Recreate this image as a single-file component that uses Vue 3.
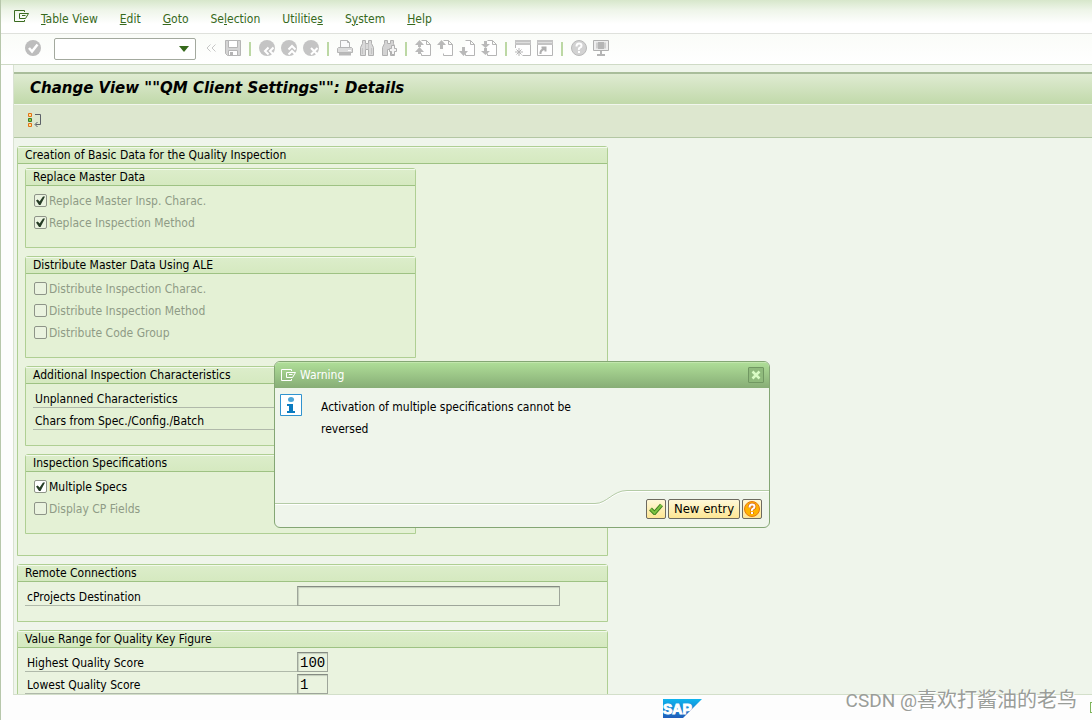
<script setup>
import { ref } from 'vue'

const menus = [
  { pre: '', key: 'T', post: 'able View' },
  { pre: '', key: 'E', post: 'dit' },
  { pre: '', key: 'G', post: 'oto' },
  { pre: 'Se', key: 'l', post: 'ection' },
  { pre: 'Utilitie', key: 's', post: '' },
  { pre: 'S', key: 'y', post: 'stem' },
  { pre: '', key: 'H', post: 'elp' }
]

const tools = [
  ['collapse', 'save'],
  ['back', 'exit', 'cancel'],
  ['print', 'find', 'findNext'],
  ['firstPage', 'prevPage', 'nextPage', 'lastPage'],
  ['newSession', 'shortcut'],
  ['help', 'layout']
]

const labels = {
  collapse: 'Collapse command field', save: 'Save', back: 'Back', exit: 'Exit', cancel: 'Cancel',
  print: 'Print', find: 'Find', findNext: 'Find next', firstPage: 'First page',
  prevPage: 'Previous page', nextPage: 'Next page', lastPage: 'Last page',
  newSession: 'New session', shortcut: 'Create shortcut', help: 'Help', layout: 'Customize layout'
}

const page = 'M6.5 .5h5l4 4v11h-9v-2M11.5 .5v4h4'
const glyphs = {
  collapse: [{ d: 'M7.5 4.5L4 8l3.5 3.5M12.5 4.5L9 8l3.5 3.5', s: '#c6c6c6' }],
  save: [
    { d: 'M.5 .5h15v15h-13l-2-2z', s: '#b5b5b5', f: '#d4d4d4' },
    { d: 'M3.500 .5h9v7h-9z', s: '#b5b5b5', f: '#fff' },
    { d: 'M3.500 10.500h9v5h-9z', s: '#b5b5b5', f: '#fff' },
    { d: 'M5 12h3v4h-3z', f: '#b5b5b5' }
  ],
  back: [
    { d: 'M8 0a8 8 0 1 0 0 16a8 8 0 1 0 0-16z', f: '#c4c4c4' },
    { d: 'M9.500 7.500L6 11l3.500 3.500M14.500 7.500L11 11l3.500 3.500', s: '#fff', w: 2 }
  ],
  exit: [
    { d: 'M8 0a8 8 0 1 0 0 16a8 8 0 1 0 0-16z', f: '#c4c4c4' },
    { d: 'M7.500 9.500L11 6l3.500 3.500M7.500 14.500L11 11l3.500 3.500', s: '#fff', w: 2 }
  ],
  cancel: [
    { d: 'M8 0a8 8 0 1 0 0 16a8 8 0 1 0 0-16z', f: '#c4c4c4' },
    { d: 'M8 8l6.500 6.500M14.500 8L8 14.500', s: '#fff', w: 2 }
  ],
  print: [
    { d: 'M3.500 7.500v-7h7l2 2v5', s: '#b5b5b5', f: '#fafafa' },
    { d: 'M10.500 .5v2h2', s: '#b5b5b5' },
    { d: 'M1.500 7.500h13l1 1v4h-15v-4z', s: '#b5b5b5', f: '#dcdcdc' },
    { d: 'M2 12.500h12v3h-12z', f: '#b9b9b9' },
    { d: 'M11 10h3v1h-3z', f: '#fff' }
  ],
  find: [
    { d: 'M3.500 .5h3v3h3v-3h3v3l2 4v8h-5v-6h-3v6h-5v-8l2-4z', s: '#b0b0b0', f: '#d9d9d9' },
    { d: 'M6.500 4v5M9.500 4v5M3.500 8v6M12.500 8v6', s: '#c3c3c3' }
  ],
  findNext: [
    { d: 'M3.500 .5h3v3h3v-3h3v3l1 3v9h-4v-6h-3v6h-5v-8l2-4z', s: '#b0b0b0', f: '#d3d3d3' },
    { d: 'M10.500 5.500h3v3h2v3h-2v3h-3v-3h-2v-3h2z', s: '#b0b0b0', f: '#f4f4f4' }
  ],
  firstPage: [
    { d: page, s: '#b5b5b5', f: '#fff' },
    { d: 'M4.500 0L9 5H6v2h-3v-2H0zM4.500 7L9 12H6v2h-3v-2H0z', f: '#b9b9b9' }
  ],
  prevPage: [
    { d: page, s: '#b5b5b5', f: '#fff' },
    { d: 'M4.500 0L9 5H6v4h-3v-4H0z', f: '#b9b9b9' }
  ],
  nextPage: [
    { d: page, s: '#b5b5b5', f: '#fff' },
    { d: 'M4.500 16L9 11H6V7h-3v4H0z', f: '#b9b9b9' }
  ],
  lastPage: [
    { d: page, s: '#b5b5b5', f: '#fff' },
    { d: 'M4.500 8L9 4H6V1h-3v3H0zM4.500 15L9 11H6V8h-3v3H0z', f: '#b9b9b9' }
  ],
  newSession: [
    { d: 'M.5 8v-7.500h15v15h-8', s: '#b5b5b5', f: '#fff' },
    { d: 'M0 0h16v5h-16z', f: '#c4c4c4' },
    { d: 'M1 2.500h14', s: '#dedede' },
    { d: 'M4 8v8M0 12h8M1.500 9.500l5 5M6.500 9.500l-5 5', s: '#b5b5b5' }
  ],
  shortcut: [
    { d: 'M.5 .5h15v15h-15z', s: '#b5b5b5', f: '#fff' },
    { d: 'M0 0h16v5h-16z', f: '#c4c4c4' },
    { d: 'M1 2.500h14', s: '#dedede' },
    { d: 'M3.500 14q-.5-4 4-5M4.500 7.500h4v4', s: '#b0b0b0', w: 2 }
  ],
  help: [
    { d: 'M8 .5a7.500 7.500 0 1 0 0 15a7.500 7.500 0 1 0 0-15z', s: '#b9b9b9', f: '#d2d2d2' },
    { d: 'M5.500 6.500q0-3 2.500-3t2.500 2.200q0 1.300-1.500 2t-1 2.300M8 11v2', s: '#fff', w: 2 }
  ],
  layout: [
    { d: 'M.5 .5h15v10h-15z', s: '#b0b0b0', f: '#eee' },
    { d: 'M3 2.500h2v6h-2zM11 2.500h2v6h-2z', f: '#cfcfcf' },
    { d: 'M5 2h6v7h-6z', f: '#b5b5b5' },
    { d: 'M7 11h2v3h-2zM4 14h8v2h-8z', f: '#b5b5b5' }
  ]
}

const command = ref('')
const replace = ref([
  { label: 'Replace Master Insp. Charac.', on: true },
  { label: 'Replace Inspection Method', on: true }
])
const distribute = ref([
  { label: 'Distribute Inspection Charac.', on: false },
  { label: 'Distribute Inspection Method', on: false },
  { label: 'Distribute Code Group', on: false }
])
const multipleSpecs = ref(true)
const cpFields = ref(false)
const destination = ref('')
const highest = ref('100')
const lowest = ref('1')
</script>

<template>
  <div class="window">
    <nav class="menubar">
      <button class="sysmenu" aria-label="System menu">
        <svg width="16" height="12" viewBox="0 0 16 12"><path d="M10.500 2V.5H.5v11h10V10M5.500 3.500h9l-3 5h-6zM8 5.500h3.500" fill="none" stroke="#3a6b1f" /></svg>
      </button>
      <button v-for="m in menus" :key="m.key + m.post" class="menu">{{ m.pre }}<u>{{ m.key }}</u>{{ m.post }}</button>
    </nav>

    <div class="toolbar">
      <button class="tool" aria-label="Enter">
        <svg width="16" height="16" viewBox="0 0 16 16"><circle cx="8" cy="8" r="8" fill="#bdbdbd" /><path d="M4 8l3 3.500L12.500 4.500" fill="none" stroke="#fff" stroke-width="2.500" /></svg>
      </button>
      <div class="command">
        <input v-model="command" type="text" aria-label="Command" />
        <button aria-label="Command history"><svg width="10" height="6" viewBox="0 0 10 6"><path d="M0 0h10L5 6z" fill="#36691c" /></svg></button>
      </div>
      <div v-for="(set, n) in tools" :key="n" class="toolset">
        <button v-for="t in set" :key="t" class="tool" :aria-label="labels[t]">
          <svg width="16" height="16" viewBox="0 0 16 16">
            <path v-for="(p, i) in glyphs[t]" :key="i" :d="p.d" :fill="p.f || 'none'" :stroke="p.s || 'none'" :stroke-width="p.w || 1" />
          </svg>
        </button>
      </div>
    </div>

    <main class="work">
      <header class="titlebar"><h1>Change View ""QM Client Settings"": Details</h1></header>
      <div class="appbar">
        <button class="tool" aria-label="Expand and collapse">
          <svg width="14" height="14" viewBox="0 0 14 14">
            <path d="M.5 .5h3v3h-3zM.5 10.500h3v3h-3z" fill="#ffe08a" stroke="#e07018" />
            <path d="M.5 5.500h3v3h-3z" fill="#8cc63f" stroke="#3c7a28" />
            <path d="M7 1.500h5.500v10H7.500M9.500 9L7 11.500L9.500 14" fill="none" stroke="#5c6168" />
          </svg>
        </button>
      </div>

      <div class="content">
        <section class="group">
          <h2>Creation of Basic Data for the Quality Inspection</h2>
          <div class="body nest">
            <section class="group inner">
              <h2>Replace Master Data</h2>
              <div class="body">
                <label v-for="c in replace" :key="c.label" class="check off"><input v-model="c.on" type="checkbox" disabled />{{ c.label }}</label>
              </div>
            </section>
            <section class="group inner">
              <h2>Distribute Master Data Using ALE</h2>
              <div class="body">
                <label v-for="c in distribute" :key="c.label" class="check off"><input v-model="c.on" type="checkbox" disabled />{{ c.label }}</label>
              </div>
            </section>
            <section class="group inner">
              <h2>Additional Inspection Characteristics</h2>
              <div class="body">
                <div class="field"><span class="name">Unplanned Characteristics</span></div>
                <div class="field"><span class="name">Chars from Spec./Config./Batch</span></div>
              </div>
            </section>
            <section class="group inner">
              <h2>Inspection Specifications</h2>
              <div class="body">
                <label class="check"><input v-model="multipleSpecs" type="checkbox" />Multiple Specs</label>
                <label class="check off"><input v-model="cpFields" type="checkbox" disabled />Display CP Fields</label>
              </div>
            </section>
          </div>
        </section>

        <section class="group">
          <h2>Remote Connections</h2>
          <div class="body">
            <div class="field"><label class="name" for="dest">cProjects Destination</label><input id="dest" v-model="destination" class="long" type="text" /></div>
          </div>
        </section>

        <section class="group">
          <h2>Value Range for Quality Key Figure</h2>
          <div class="body">
            <div class="field"><label class="name" for="high">Highest Quality Score</label><input id="high" v-model="highest" class="short" type="text" /></div>
            <div class="field"><label class="name" for="low">Lowest Quality Score</label><input id="low" v-model="lowest" class="short" type="text" /></div>
          </div>
        </section>
      </div>
    </main>

    <footer class="status">
      <svg width="39" height="19" viewBox="0 0 39 19">
        <defs><linearGradient id="sap" x1="0" y1="0" x2="0" y2="1"><stop offset="0" stop-color="#0fb5ee" /><stop offset="1" stop-color="#1f5cba" /></linearGradient></defs>
        <path d="M0 0h39L20 19H0z" fill="url(#sap)" />
        <text x="0" y="15" class="sap">SAP</text>
      </svg>
    </footer>
    <div class="edge"></div>
    <div class="watermark"><span>CSDN @</span>喜欢打酱油的老鸟</div>

    <div class="dialog" role="dialog" aria-labelledby="dlg">
      <header>
        <svg width="16" height="12" viewBox="0 0 16 12"><path d="M10.500 2V.5H.5v11h10V10M5.500 3.500h9l-3 5h-6zM8 5.500h3.500" fill="none" stroke="#fff" /></svg>
        <h2 id="dlg">Warning</h2>
        <button aria-label="Close"><svg width="10" height="10" viewBox="0 0 10 10"><path d="M1.500 1.500l7 7M8.500 1.500l-7 7" stroke="#d9fbc4" stroke-width="2.500" /></svg></button>
      </header>
      <div class="message">
        <svg width="22" height="22" viewBox="0 0 22 22">
          <path d="M.5 .5h21v21H.5z" fill="#fff" stroke="#2f93cf" />
          <ellipse cx="11" cy="5.500" rx="3" ry="2.500" fill="#4ba6d8" />
          <path d="M7 10h6v7h2v2H7v-2h2v-5H7z" fill="#0a7bc0" />
        </svg>
        <p>Activation of multiple specifications cannot be<br />reversed</p>
      </div>
      <div class="actions">
        <div class="rule">
          <span class="low"></span>
          <svg width="32" height="16" viewBox="0 0 32 16"><path d="M0 14.500C12 14.500 18 1.500 32 1.500" fill="none" stroke="#fff" /><path d="M0 13.500C12 13.500 18 .5 32 .5" fill="none" stroke="#b4cba6" /></svg>
          <span class="high"></span>
        </div>
        <div class="buttons">
          <button class="square" aria-label="Continue"><svg width="14" height="12" viewBox="0 0 14 12"><path d="M1.500 6l4 4L12.500 2" fill="none" stroke="#3f8020" stroke-width="4" /><path d="M1.500 6l4 4L12.500 2" fill="none" stroke="#7dc242" stroke-width="2" /></svg></button>
          <button class="wide">New entry</button>
          <button class="square" aria-label="Help"><svg width="16" height="16" viewBox="0 0 16 16"><circle cx="8" cy="8" r="7.500" fill="#ffb400" stroke="#e87710" /><path d="M5.500 6.500q0-3 2.500-3t2.500 2.200q0 1.300-1.500 2t-1 2.300M8 11v2" fill="none" stroke="#d9661a" stroke-width="3.500" /><path d="M5.500 6.500q0-3 2.500-3t2.500 2.200q0 1.300-1.500 2t-1 2.300M8 11v2" fill="none" stroke="#fff" stroke-width="2" /></svg></button>
        </div>
      </div>
    </div>
  </div>
</template>

<style>
body { margin: 0; }
</style>

<style scoped>
* { box-sizing: border-box; }
.window {
  position: relative;
  display: flex;
  flex-direction: column;
  height: 100vh;
  overflow: hidden;
  border-left: 1px solid #b7c7ab;
  background: #fdfdfd;
  color: #000;
  font: 12px/16px "DejaVu Sans Condensed", "DejaVu Sans", sans-serif;
  font-stretch: condensed;
}
button, input { font: inherit; color: inherit; margin: 0; }
button { padding: 0; border: 0; background: none; display: flex; align-items: center; justify-content: center; }
svg { display: block; flex: none; }
h1, h2, p { margin: 0; }

.menubar {
  display: flex;
  align-items: center;
  gap: 22px;
  height: 34px;
  padding: 4px 0 0 13px;
  border-bottom: 1px solid #dfe1dc;
  background: linear-gradient(#d7e7cb, #eef5e9 10px, #fff 24px);
  color: #36691c;
  flex: none;
}
.menu { display: block; white-space: nowrap; }
.sysmenu { margin: 0 -11px 6px 0; }

.toolbar {
  display: flex;
  align-items: center;
  height: 31px;
  padding-left: 21px;
  border-bottom: 1px solid #cfdac6;
  background: linear-gradient(#fafcf8, #fff);
  flex: none;
}
.tool { width: 22px; height: 22px; }
.toolbar .tool { padding-bottom: 2px; }
.command {
  display: flex;
  width: 142px;
  height: 22px;
  margin: 0 4px 0 10px;
  border: 1px solid #a3a99e;
  border-radius: 2px;
  background: #fff;
}
.command input { flex: 1; min-width: 0; border: 0; outline: 0; background: none; }
.command button { width: 22px; }
.toolset { display: flex; align-items: center; }
.toolset + .toolset::before { content: ""; width: 2px; height: 14px; margin: 0 5px; background: #bcd8a4; }

.work {
  display: flex;
  flex-direction: column;
  flex: 1;
  min-height: 0;
  margin-left: 12px;
  padding-top: 7px;
  border-left: 1px solid #d9e2d2;
  border-bottom: 1px solid #d3dfca;
  background: #eff5eb;
}
.titlebar {
  display: flex;
  align-items: center;
  height: 33px;
  padding: 0 16px 2px;
  border-top: 2px solid #a9bd9b;
  border-bottom: 1px solid #f1f6ed;
  background: linear-gradient(#dfebd2, #c1d9aa);
  flex: none;
}
h1 { font: italic bold 15px/20px "DejaVu Sans", sans-serif; white-space: nowrap; }
.appbar {
  display: flex;
  align-items: center;
  height: 33px;
  padding: 0 0 2px 10px;
  border-bottom: 1px solid #b3c7a3;
  background: #dde7cf;
  flex: none;
}
.content {
  display: flex;
  flex-direction: column;
  gap: 8px;
  flex: 1;
  min-height: 0;
  padding: 8px 3px 0;
  overflow: hidden;
}
.group { width: 591px; max-width: 100%; flex: none; border: 1px solid #afcf93; border-radius: 3px 3px 0 0; background: #eaf3df; }
.group.inner { width: 391px; background: #e4f1d5; }
.group > h2 {
  height: 17px;
  padding-left: 7px;
  border-top: 1px solid #f2f9ec;
  border-bottom: 1px solid #9ec283;
  background: linear-gradient(#dcedca, #d5e9c0);
  font-size: 12px;
  line-height: 15px;
  font-weight: normal;
  white-space: nowrap;
}
.body { padding: 4px 7px 13px; }
.body.nest { display: flex; flex-direction: column; gap: 8px; padding-bottom: 21px; }
.check { display: flex; align-items: center; gap: 2px; height: 22px; padding-left: 1px; }
.check.off { color: #8f9b86; }
.check input {
  appearance: none;
  position: relative;
  width: 13px;
  height: 13px;
  margin-bottom: 1px;
  border: 1px solid #8e9488;
  border-radius: 2px;
  background: #fff;
}
.check input:disabled { background: #eaf3df; }
.check input:checked::after {
  content: "";
  position: absolute;
  inset: 1px;
  background: #263d26;
  clip-path: polygon(0 50%, 20% 38%, 40% 62%, 78% 5%, 100% 5%, 50% 100%, 34% 100%);
}
.field { display: flex; height: 22px; align-items: flex-start; }
.name { width: 272px; height: 20px; padding: 1px 2px 0; border-bottom: 1px solid #b0b9aa; line-height: 20px; }
.field input {
  height: 20px;
  padding: 2px 2px 0;
  border: 1px solid #9ea59a;
  border-top-color: #858b82;
  outline: 0;
  background: #eaf3df;
  box-shadow: inset 1px 1px 1px #c3ccbb;
  font: 14px/16px "Liberation Mono", monospace;
}
.long { width: 263px; }
.short { width: 31px; }

.status { display: flex; height: 25px; padding: 4px 390px 0 0; justify-content: flex-end; flex: none; background: #fdfdfd; }
.sap { font: bold 14px "Liberation Sans", sans-serif; fill: #fff; stroke: #fff; stroke-width: 1px; }
.edge { position: absolute; right: 0; bottom: 7px; width: 2px; height: 11px; border: 1px solid #7fb55c; border-right: 0; }
.watermark {
  position: absolute;
  right: 15px;
  bottom: 7px;
  color: #9a9d99;
  font: 20px/24px Roboto, "Noto Sans CJK SC", sans-serif;
  text-shadow: 1px 1px 0 #fff;
  white-space: nowrap;
}
.watermark span { font-size: 19px; }

.dialog {
  position: absolute;
  left: 273px;
  top: 361px;
  width: 496px;
  border: 1px solid #84a674;
  border-radius: 6px;
  background: #eff5eb;
  overflow: hidden;
}
.dialog header {
  display: flex;
  align-items: center;
  gap: 3px;
  height: 26px;
  padding: 0 5px 2px 6px;
  border-top: 1px solid #c2e6ad;
  background: linear-gradient(#aedd97, #87ad76);
  color: #fff;
}
.dialog h2 { flex: 1; font-size: 12px; font-weight: normal; }
.dialog header button { width: 16px; height: 16px; border: 1px solid #719762; border-radius: 1px; background: #8fba7c; }
.message { display: flex; gap: 19px; height: 102px; padding: 6px 5px 0; }
.message p { line-height: 22px; padding-top: 2px; }
.actions { height: 37px; }
.rule { display: flex; height: 16px; margin-bottom: -7px; }
.rule span { border: 0 solid #b4cba6; border-top-width: 1px; box-shadow: inset 0 1px #fff; }
.low { flex: 1; margin-top: 13px; }
.high { width: 142px; }
.buttons { display: flex; justify-content: flex-end; gap: 2px; padding-right: 7px; }
.buttons button {
  height: 20px;
  border: 1px solid #6d6a60;
  border-radius: 2px;
  background: linear-gradient(#fff8d8, #fde694);
}
.buttons .square { width: 20px; }
.buttons .wide { width: 72px; font-size: 13px; }
</style>
